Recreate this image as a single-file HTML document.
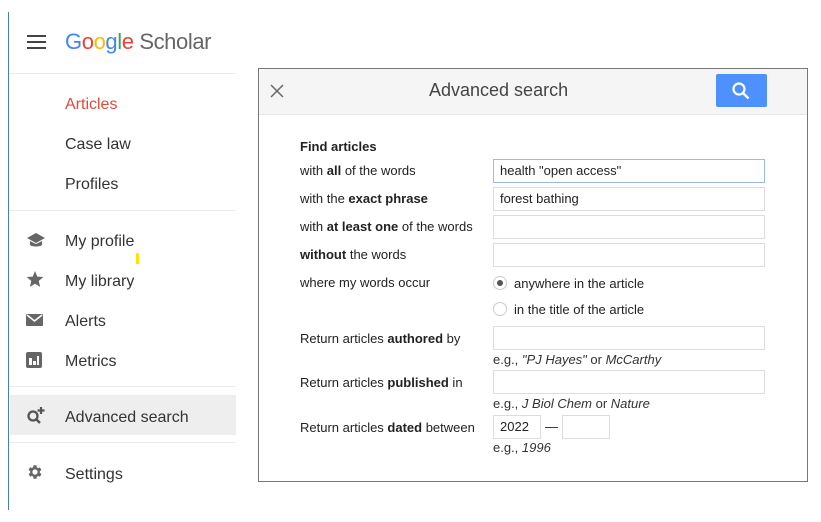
<!DOCTYPE html>
<html><head><meta charset="utf-8"><style>
*{margin:0;padding:0;box-sizing:border-box}
body{width:821px;height:522px;background:#fff;font-family:"Liberation Sans",Arial,sans-serif;position:relative;overflow:hidden;color:#222}
.a{position:absolute;white-space:nowrap}
.nav{font-size:16px;color:#333}
.hr{position:absolute;left:9px;width:227px;height:1px;background:#ebebeb}
.lbl{font-size:13px;color:#222}
.in{position:absolute;border:1px solid #ddd;background:#fff;font-size:13px;padding:3px 6px;height:24px;line-height:16px}
.ic{position:absolute;left:26px}
</style></head><body>
<div class="a" style="left:8px;top:12px;width:1px;height:498px;background:#4a7fb5"></div>
<svg class="a" style="left:27px;top:35px" width="20" height="14"><rect y="0" width="19" height="2" fill="#444"/><rect y="6" width="19" height="2" fill="#444"/><rect y="12" width="19" height="2" fill="#444"/></svg>
<div class="a" style="left:65px;top:29px;font-size:22px;letter-spacing:-0.4px"><span style="color:#4285f4">G</span><span style="color:#ea4335">o</span><span style="color:#fbbc05">o</span><span style="color:#4285f4">g</span><span style="color:#34a853">l</span><span style="color:#ea4335">e</span> <span style="color:#666">Scholar</span></div>
<div class="hr" style="top:73px"></div>
<div class="a nav" style="left:65px;top:96px;color:#dd4b39">Articles</div>
<div class="a nav" style="left:65px;top:136px">Case law</div>
<div class="a nav" style="left:65px;top:176px">Profiles</div>
<div class="hr" style="top:210px"></div>
<svg class="ic a" style="top:232px" width="20" height="17" viewBox="0 0 20 17"><path d="M10 1L1 6l9 5 9-5z" fill="#666"/><path d="M4 9v4c2 2 10 2 12 0V9l-6 3z" fill="#666"/></svg>
<div class="a nav" style="left:65px;top:233px">My profile</div>
<div class="a" style="left:136px;top:253px;width:3px;height:11px;background:#ffe400"></div>
<svg class="ic a" style="top:271px" width="18" height="17" viewBox="0 0 24 23"><path d="M12 0l3.1 7.6 8.2.6-6.3 5.3 2 8L12 17.2 5 21.5l2-8L.7 8.2l8.2-.6z" fill="#666"/></svg>
<div class="a nav" style="left:65px;top:273px">My library</div>
<svg class="ic a" style="top:314px" width="17" height="12"><rect width="17" height="12" rx="1" fill="#666"/><path d="M1 1l7.5 6L16 1" stroke="#fff" stroke-width="1.6" fill="none"/></svg>
<div class="a nav" style="left:65px;top:313px">Alerts</div>
<svg class="ic a" style="top:352px" width="16" height="16"><rect width="16" height="16" rx="2" fill="#666"/><rect x="3" y="6" width="3" height="7" fill="#fff"/><rect x="7" y="9" width="3" height="4" fill="#fff"/><rect x="11" y="4" width="2" height="9" fill="#fff"/></svg>
<div class="a nav" style="left:65px;top:353px">Metrics</div>
<div class="hr" style="top:386px"></div>
<div class="a" style="left:10px;top:395px;width:226px;height:40px;background:#eee"></div>
<svg class="ic a" style="top:405px" width="20" height="20"><circle cx="7" cy="11" r="4.5" stroke="#555" stroke-width="2.3" fill="none"/><path d="M10 14l4 4" stroke="#555" stroke-width="2.5"/><path d="M15 2v7M11.5 5.5h7" stroke="#555" stroke-width="2.2"/></svg>
<div class="a nav" style="left:65px;top:409px">Advanced search</div>
<div class="hr" style="top:442px"></div>
<svg class="ic a" style="top:463px" width="18" height="18" viewBox="0 0 24 24"><path fill="#666" d="M19.4 13a7.5 7.5 0 000-2l2.1-1.6-2-3.5-2.5 1a7.3 7.3 0 00-1.7-1L15 3h-4l-.4 2.7a7.3 7.3 0 00-1.7 1l-2.5-1-2 3.5L6.6 11a7.5 7.5 0 000 2l-2.1 1.6 2 3.5 2.5-1a7.3 7.3 0 001.7 1L11 21h4l.4-2.7a7.3 7.3 0 001.7-1l2.5 1 2-3.5zM13 15.5a3.5 3.5 0 110-7 3.5 3.5 0 010 7z" transform="translate(-1 0)"/></svg>
<div class="a nav" style="left:65px;top:466px">Settings</div>

<div class="a" style="left:258px;top:68px;width:550px;height:414px;border:1px solid #777"></div>
<div class="a" style="left:259px;top:69px;width:548px;height:46px;background:#f5f5f5;border-bottom:1px solid #e5e5e5"></div>
<svg class="a" style="left:270px;top:84px" width="14" height="14"><path d="M1 1l12 12M13 1L1 13" stroke="#666" stroke-width="1.5"/></svg>
<div class="a" style="left:429px;top:80px;font-size:18px;color:#444">Advanced search</div>
<div class="a" style="left:716px;top:74px;width:51px;height:33px;background:#4d90fe;border-radius:2px"></div>
<svg class="a" style="left:731px;top:81px" width="20" height="20"><circle cx="8" cy="8" r="5.5" stroke="#fff" stroke-width="2.2" fill="none"/><path d="M12 12l5.5 5.5" stroke="#fff" stroke-width="2.5"/></svg>

<div class="a lbl" style="left:300px;top:139px;font-weight:bold">Find articles</div>
<div class="a lbl" style="left:300px;top:163px">with <b>all</b> of the words</div>
<div class="a lbl" style="left:300px;top:191px">with the <b>exact phrase</b></div>
<div class="a lbl" style="left:300px;top:219px">with <b>at least one</b> of the words</div>
<div class="a lbl" style="left:300px;top:247px"><b>without</b> the words</div>
<div class="a lbl" style="left:300px;top:275px">where my words occur</div>
<div class="in" style="left:493px;top:159px;width:272px;border-color:#9bbbe6">health "open access"</div>
<div class="in" style="left:493px;top:187px;width:272px">forest bathing</div>
<div class="in" style="left:493px;top:215px;width:272px"></div>
<div class="in" style="left:493px;top:243px;width:272px"></div>
<div class="a" style="left:493px;top:276px;width:14px;height:14px;border:1px solid #ccc;border-radius:50%"><div style="margin:3px;width:6px;height:6px;border-radius:50%;background:#555"></div></div>
<div class="a lbl" style="left:514px;top:276px">anywhere in the article</div>
<div class="a" style="left:493px;top:302px;width:14px;height:14px;border:1px solid #ccc;border-radius:50%"></div>
<div class="a lbl" style="left:514px;top:302px">in the title of the article</div>
<div class="a lbl" style="left:300px;top:331px">Return articles <b>authored</b> by</div>
<div class="in" style="left:493px;top:326px;width:272px"></div>
<div class="a lbl" style="left:493px;top:352px;color:#333">e.g., <i>"PJ Hayes"</i> or <i>McCarthy</i></div>
<div class="a lbl" style="left:300px;top:375px">Return articles <b>published</b> in</div>
<div class="in" style="left:493px;top:370px;width:272px"></div>
<div class="a lbl" style="left:493px;top:396px;color:#333">e.g., <i>J Biol Chem</i> or <i>Nature</i></div>
<div class="a lbl" style="left:300px;top:420px">Return articles <b>dated</b> between</div>
<div class="in" style="left:493px;top:415px;width:48px">2022</div>
<div class="a lbl" style="left:545px;top:419px">—</div>
<div class="in" style="left:562px;top:415px;width:48px"></div>
<div class="a lbl" style="left:493px;top:440px;color:#333">e.g., <i>1996</i></div>
</body></html>
